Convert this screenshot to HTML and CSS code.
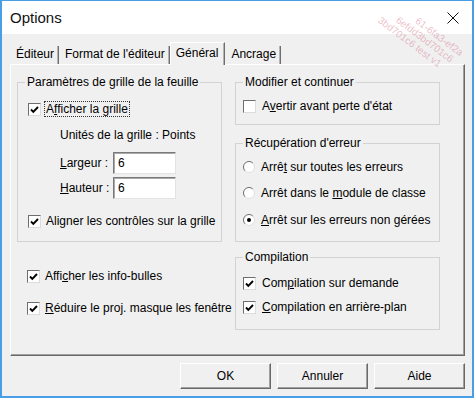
FILE: index.html
```html
<!DOCTYPE html>
<html lang="fr">
<head>
<meta charset="utf-8">
<title>Options</title>
<link rel="stylesheet" href="styles.css">
</head>
<body>
<div class="window">
  <div class="titlebar">
    <span class="title">Options</span>
    <svg class="close" width="12" height="12" viewBox="0 0 12 12"><path d="M0.5 0.5 L11.5 11.5 M11.5 0.5 L0.5 11.5" stroke="#111" stroke-width="1" fill="none"/></svg>
  </div>
  <div class="body">
    <div class="tabs">
      <div class="tab">Éditeur</div>
      <div class="tab">Format de l'éditeur</div>
      <div class="tab active">Général</div>
      <div class="tab">Ancrage</div>
    </div>
    <div class="panel">
      <div class="col">
        <div class="group g-grid">
          <div class="group-title">Paramètres de grille de la feuille</div>
          <div class="row mt11">
            <span class="box"><svg viewBox="0 0 11 11" width="11" height="11"><path d="M2 5.5 L4.3 7.8 L9 3" stroke="#000" stroke-width="1.9" fill="none"/></svg></span>
            <span class="lbl focus">A<u>f</u>ficher la grille</span>
          </div>
          <div class="text-row mt10">Unités de la grille : Points</div>
          <div class="field-row mt9">
            <span class="field-lbl"><u>L</u>argeur :</span>
            <span class="input">6</span>
          </div>
          <div class="field-row mt4">
            <span class="field-lbl"><u>H</u>auteur :</span>
            <span class="input">6</span>
          </div>
          <div class="row mt15">
            <span class="box"><svg viewBox="0 0 11 11" width="11" height="11"><path d="M2 5.5 L4.3 7.8 L9 3" stroke="#000" stroke-width="1.9" fill="none"/></svg></span>
            <span class="lbl">Ali<u>g</u>ner les contrôles sur la grille</span>
          </div>
        </div>
        <div class="row solo mt26">
          <span class="box"><svg viewBox="0 0 11 11" width="11" height="11"><path d="M2 5.5 L4.3 7.8 L9 3" stroke="#000" stroke-width="1.9" fill="none"/></svg></span>
          <span class="lbl">Affi<u>c</u>her les info-bulles</span>
        </div>
        <div class="row solo mt16">
          <span class="box"><svg viewBox="0 0 11 11" width="11" height="11"><path d="M2 5.5 L4.3 7.8 L9 3" stroke="#000" stroke-width="1.9" fill="none"/></svg></span>
          <span class="lbl"><u>R</u>éduire le proj. masque les fenêtre</span>
        </div>
      </div>
      <div class="col">
        <div class="group g-edit">
          <div class="group-title">Modifier et continuer</div>
          <div class="row mt8">
            <span class="box"></span>
            <span class="lbl">A<u>v</u>ertir avant perte d'état</span>
          </div>
        </div>
        <div class="group g-err mt18">
          <div class="group-title">Récupération d'erreur</div>
          <div class="row mt8">
            <svg class="radio" width="12" height="12" viewBox="0 0 12 12"><circle cx="6" cy="6" r="5.5" fill="#fff"/><path d="M2.1 9.9 A5.5 5.5 0 0 1 9.9 2.1" stroke="#6e6e6e" stroke-width="1" fill="none"/><path d="M9.9 2.1 A5.5 5.5 0 0 1 2.1 9.9" stroke="#dedede" stroke-width="1" fill="none"/></svg>
            <span class="lbl">Arrê<u>t</u> sur toutes les erreurs</span>
          </div>
          <div class="row mt10">
            <svg class="radio" width="12" height="12" viewBox="0 0 12 12"><circle cx="6" cy="6" r="5.5" fill="#fff"/><path d="M2.1 9.9 A5.5 5.5 0 0 1 9.9 2.1" stroke="#6e6e6e" stroke-width="1" fill="none"/><path d="M9.9 2.1 A5.5 5.5 0 0 1 2.1 9.9" stroke="#dedede" stroke-width="1" fill="none"/></svg>
            <span class="lbl">Arrêt dans le <u>m</u>odule de classe</span>
          </div>
          <div class="row mt11">
            <svg class="radio" width="12" height="12" viewBox="0 0 12 12"><circle cx="6" cy="6" r="5.5" fill="#fff"/><path d="M2.1 9.9 A5.5 5.5 0 0 1 9.9 2.1" stroke="#6e6e6e" stroke-width="1" fill="none"/><path d="M9.9 2.1 A5.5 5.5 0 0 1 2.1 9.9" stroke="#dedede" stroke-width="1" fill="none"/><circle cx="6" cy="6" r="2" fill="#000"/></svg>
            <span class="lbl"><u>A</u>rrêt sur les erreurs non gérées</span>
          </div>
        </div>
        <div class="group g-comp mt15">
          <div class="group-title">Compilation</div>
          <div class="row mt10">
            <span class="box"><svg viewBox="0 0 11 11" width="11" height="11"><path d="M2 5.5 L4.3 7.8 L9 3" stroke="#000" stroke-width="1.9" fill="none"/></svg></span>
            <span class="lbl">Com<u>p</u>ilation sur demande</span>
          </div>
          <div class="row mt8">
            <span class="box"><svg viewBox="0 0 11 11" width="11" height="11"><path d="M2 5.5 L4.3 7.8 L9 3" stroke="#000" stroke-width="1.9" fill="none"/></svg></span>
            <span class="lbl"><u>C</u>ompilation en arrière-plan</span>
          </div>
        </div>
      </div>
    </div>
    <div class="buttons">
      <div class="btn">OK</div>
      <div class="btn">Annuler</div>
      <div class="btn">Aide</div>
    </div>
  </div>
  <div class="watermark">
    <span>61-6fa3-ef2a</span>
    <span>6efdd3bd701c6</span>
    <span>3bd701c6 test v1</span>
  </div>
</div>
</body>
</html>
```

FILE: styles.css
```css
* { box-sizing: border-box; }

body {
  margin: 0;
  font-family: "Liberation Sans", Arial, sans-serif;
  font-size: 12px;
  color: #000;
  background: #fff;
}

.window {
  width: 474px;
  height: 398px;
  border: 2px solid #4a9ee6;
  border-top-width: 1px;
  background: #f0f0f0;
  display: flex;
  flex-direction: column;
  position: relative;
  overflow: hidden;
}

.titlebar {
  height: 33px;
  flex: none;
  background: #fff;
  display: flex;
  align-items: center;
  justify-content: space-between;
  padding: 0 13px 0 8px;
}

.title {
  font-size: 15px;
  color: #111;
}

.close { display: block; }

.body {
  flex: 1;
  padding: 8px 7px 7px 8px;
  display: flex;
  flex-direction: column;
}

.tabs {
  height: 22px;
  display: flex;
  align-items: flex-end;
  position: relative;
  z-index: 1;
}

.tab {
  height: 18px;
  line-height: 16px;
  padding: 0 4px 0 6px;
  border-right: 1px solid #6f6f6f;
  box-shadow: inset -1px 0 0 #b4b4b4;
  white-space: nowrap;
}

.tab.active {
  height: 23px;
  margin-bottom: -1px;
  padding: 2px 6px 0 5px;
  border-top: 1px solid #fff;
  border-left: 1px solid #fff;
  background: #f0f0f0;
}

.panel {
  height: 292px;
  flex: none;
  border: 1px solid;
  border-color: #fff #696969 #696969 #fff;
  box-shadow: inset -1px -1px 0 #a0a0a0;
  padding: 17px 0 0 6px;
  display: flex;
  gap: 13px;
}

.col {
  width: 205px;
  display: flex;
  flex-direction: column;
}

.group {
  border: 1px solid #d3d3d3;
}

.group-title {
  width: fit-content;
  margin: -9px 0 0 7px;
  padding: 0 2px;
  line-height: 16px;
  background: #f0f0f0;
}

.g-grid { padding-bottom: 12px; }
.g-edit { padding-bottom: 10px; }
.g-err { padding-bottom: 13px; }
.g-comp { padding-bottom: 14px; }

.row {
  height: 16px;
  display: flex;
  align-items: center;
  gap: 6px;
  margin-left: 7px;
  line-height: 16px;
  white-space: nowrap;
}

.g-grid .row { margin-left: 10px; gap: 5px; }
.row.solo { margin-left: 10px; gap: 5px; }

.box {
  width: 13px;
  height: 13px;
  flex: none;
  background: #fff;
  border: 1px solid;
  border-color: #6e6e6e #dcdcdc #dcdcdc #6e6e6e;
  display: flex;
  align-items: center;
  justify-content: center;
}

.box svg { display: block; }

.radio { flex: none; display: block; }

.lbl.focus {
  margin-left: -2px;
  padding: 0 1px;
  border: 1px dotted #333;
  line-height: 14px;
}

.text-row {
  margin-left: 42px;
  line-height: 16px;
}

.field-row {
  height: 21px;
  display: flex;
  align-items: center;
  margin-left: 42px;
}

.field-lbl { width: 53px; flex: none; }

.input {
  width: 63px;
  height: 22px;
  background: #fff;
  border: 1px solid;
  border-color: #7a7a7a #e3e3e3 #e3e3e3 #7a7a7a;
  box-shadow: inset 1px 1px 0 #a9a9a9;
  padding: 2px 0 0 4px;
  line-height: 16px;
}

.mt4 { margin-top: 4px; }
.mt8 { margin-top: 8px; }
.mt9 { margin-top: 9px; }
.mt10 { margin-top: 10px; }
.mt11 { margin-top: 11px; }
.mt15 { margin-top: 15px; }
.mt16 { margin-top: 16px; }
.mt18 { margin-top: 18px; }
.mt26 { margin-top: 26px; }

.buttons {
  margin-top: 7px;
  display: flex;
  justify-content: flex-end;
  gap: 6px;
}

.btn {
  width: 91px;
  height: 26px;
  border: 1px solid;
  border-color: #fff #696969 #696969 #fff;
  box-shadow: inset -1px -1px 0 #a0a0a0;
  display: flex;
  align-items: center;
  justify-content: center;
  font-size: 12px;
}

u { text-decoration-thickness: 1px; text-underline-offset: 1px; }

.watermark {
  position: absolute;
  top: -4px;
  left: 394px;
  width: 100px;
  transform: rotate(37deg);
  transform-origin: 0 0;
  display: flex;
  flex-direction: column;
  font-size: 10px;
  line-height: 11px;
  color: rgba(214, 110, 135, 0.45);
  pointer-events: none;
  white-space: nowrap;
}

.watermark span:nth-child(1) { margin-left: 30px; }
.watermark span:nth-child(2) { margin-left: 14px; }
.watermark span:nth-child(3) { margin-left: 0; }
```
